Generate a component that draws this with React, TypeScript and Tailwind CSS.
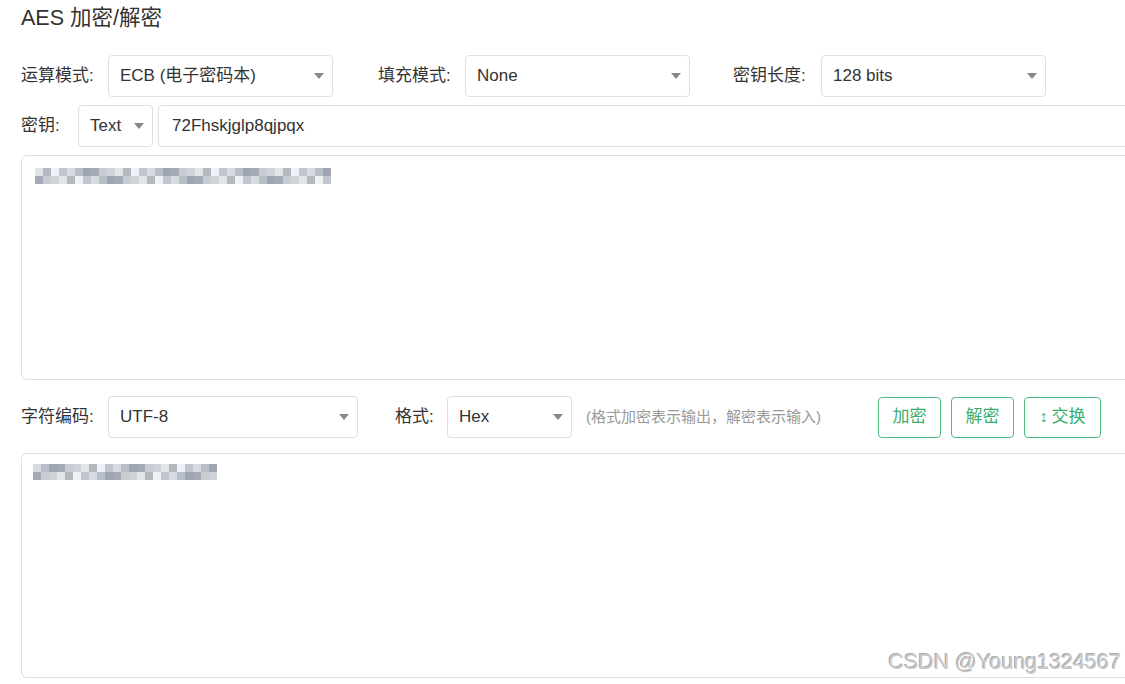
const font = { fontFamily: '"Liberation Sans", "Noto Sans CJK SC", sans-serif' };

const shades = ["#c9ccd2", "#b3b8c1", "#d7dadf", "#a5abb6", "#e2e4e8", "#bfc6d0", "#9ea6b2", "#ced3da", "#eef0f3", "#b8bec8"];

function pixels(cols: number, seed: number) {
  const rows: string[][] = [[], []];
  let s = seed;
  for (let r = 0; r < 2; r++) {
    for (let c = 0; c < cols; c++) {
      s = (s * 9301 + 49297) % 233280;
      rows[r].push(shades[s % shades.length]);
    }
  }
  return rows;
}

function Blur({ cols, seed }: { cols: number; seed: number }) {
  const rows = pixels(cols, seed);
  return (
    <div className="flex flex-col">
      {rows.map((row, i) => (
        <div key={i} className="flex">
          {row.map((c, j) => (
            <div key={j} className="h-[8px] w-[8px]" style={{ backgroundColor: c }} />
          ))}
        </div>
      ))}
    </div>
  );
}

function Caret() {
  return (
    <svg width="10" height="6" viewBox="0 0 10 6" className="shrink-0">
      <path d="M0 0h10L5 6z" fill="#888" />
    </svg>
  );
}

function Select({ value, w }: { value: string; w: string }) {
  return (
    <div
      className={`flex h-[42px] ${w} shrink-0 items-center justify-between rounded-[4px] border border-[#dcdfe6] bg-white pl-[11px] pr-[8px] text-[17px] text-[#333]`}
    >
      <span>{value}</span>
      <Caret />
    </div>
  );
}

function Label({ text, w, ml }: { text: string; w: string; ml?: string }) {
  return <span className={`shrink-0 text-[17px] text-[#333] ${w} ${ml ?? ""}`}>{text}</span>;
}

function GreenButton({ children, w }: { children: React.ReactNode; w: string }) {
  return (
    <button
      className={`flex h-[41px] ${w} items-center justify-center rounded-[4px] border border-[#4cbb80] bg-white text-[17px] text-[#3aae6f]`}
    >
      {children}
    </button>
  );
}

export default function App() {
  return (
    <div className="relative h-[684px] w-[1125px] overflow-hidden bg-white" style={font}>
      <div className="w-[1160px] pl-[21px]">
        <h1 className="pt-[4px] text-[21.5px] leading-[28px] text-[#333]">AES 加密/解密</h1>

        <div className="mt-[23px] flex h-[42px] items-center">
          <Label text="运算模式:" w="w-[87px]" />
          <Select value="ECB (电子密码本)" w="w-[225px]" />
          <Label text="填充模式:" w="w-[87px]" ml="ml-[45px]" />
          <Select value="None" w="w-[225px]" />
          <Label text="密钥长度:" w="w-[88px]" ml="ml-[43px]" />
          <Select value="128 bits" w="w-[225px]" />
        </div>

        <div className="mt-[8px] flex h-[42px] items-center">
          <Label text="密钥:" w="w-[57px]" />
          <div className="flex h-[42px] w-[75px] shrink-0 items-center justify-between rounded-[4px] border border-[#dcdfe6] pl-[11px] pr-[8px] text-[17px] text-[#333]">
            <span>Text</span>
            <Caret />
          </div>
          <div className="ml-[5px] flex h-[42px] flex-1 items-center rounded-[4px] border border-[#dcdfe6] px-[13px] text-[17px] text-[#333]">
            72Fhskjglp8qjpqx
          </div>
        </div>

        <div className="mt-[8px] h-[225px] rounded-[6px] border border-[#dcdfe6] pl-[13px] pt-[12px]">
          <Blur cols={37} seed={17} />
        </div>

        <div className="mt-[16px] flex h-[42px] items-center">
          <Label text="字符编码:" w="w-[87px]" />
          <Select value="UTF-8" w="w-[250px]" />
          <Label text="格式:" w="w-[52px]" ml="ml-[37px]" />
          <Select value="Hex" w="w-[125px]" />
          <span className="ml-[14px] w-[292px] shrink-0 text-[15px] text-[#999]">(格式加密表示输出，解密表示输入)</span>
          <div className="flex gap-[10px]">
            <GreenButton w="w-[63px]">加密</GreenButton>
            <GreenButton w="w-[63px]">解密</GreenButton>
            <GreenButton w="w-[77px]">
              <span className="mr-[4px] text-[16px]">↕</span>交换
            </GreenButton>
          </div>
        </div>

        <div className="mt-[15px] h-[225px] rounded-[6px] border border-[#dcdfe6] pl-[11px] pt-[10px]">
          <Blur cols={23} seed={5} />
        </div>
      </div>

      <div
        className="absolute bottom-[6px] right-[4px] text-[21.5px] text-[#c8c8c8]"
        style={{ textShadow: "1px 1px 0 #fff, -1px -1px 0 #aaa" }}
      >
        CSDN @Young1324567
      </div>
    </div>
  );
}
